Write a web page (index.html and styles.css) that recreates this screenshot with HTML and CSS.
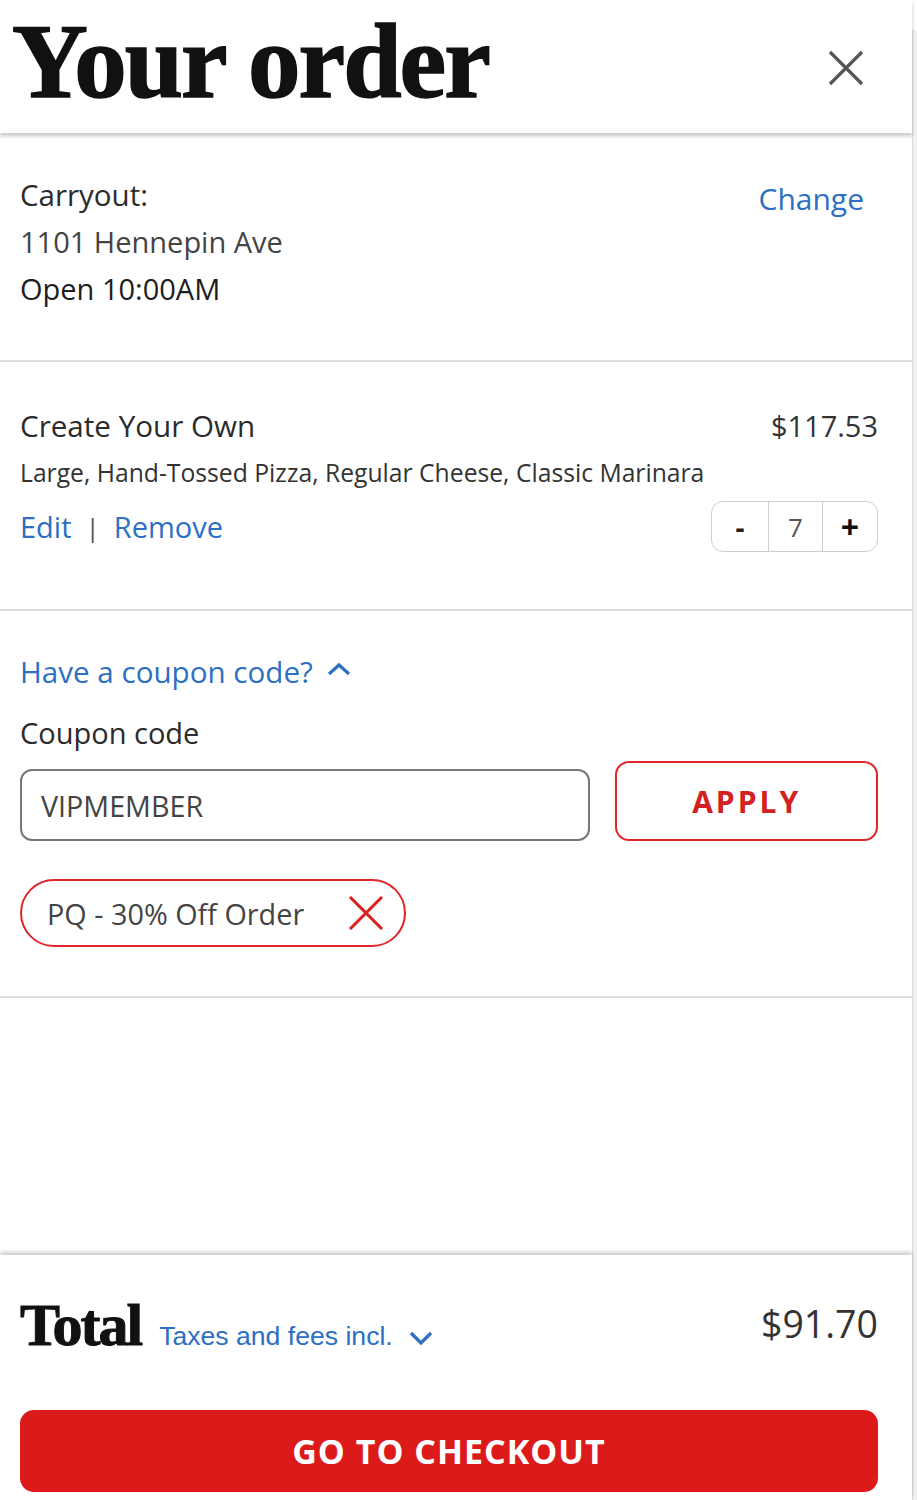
FILE: index.html
```html
<!DOCTYPE html>
<html lang="en">
<head>
<meta charset="utf-8">
<title>Your order</title>
<link rel="stylesheet" href="styles.css">
</head>
<body>
<div class="app">
  <div class="panel">
    <header class="header">
      <h1 class="title">Your order</h1>
      <button class="close" aria-label="Close">
        <svg width="36" height="36" viewBox="0 0 36 36"><path d="M2 2 L34 34 M34 2 L2 34" stroke="#555" stroke-width="3.2" fill="none"/></svg>
      </button>
    </header>

    <section class="section store">
      <div class="store-info">
        <div class="line label">Carryout:</div>
        <div class="line address">1101 Hennepin Ave</div>
        <div class="line hours">Open 10:00AM</div>
      </div>
      <a class="link change">Change</a>
    </section>

    <section class="section item">
      <div class="item-head">
        <div class="line item-name">Create Your Own</div>
        <div class="line item-price">$117.53</div>
      </div>
      <div class="line item-desc">Large, Hand-Tossed Pizza, Regular Cheese, Classic Marinara</div>
      <div class="item-actions">
        <div class="actions">
          <a class="link">Edit</a>
          <span class="sep">|</span>
          <a class="link">Remove</a>
        </div>
        <div class="stepper">
          <span class="step minus">-</span>
          <span class="step qty">7</span>
          <span class="step plus">+</span>
        </div>
      </div>
    </section>

    <section class="section coupon">
      <a class="link coupon-toggle">Have a coupon code?
        <svg width="24" height="14" viewBox="0 0 24 14"><path d="M2 12 L12 3 L22 12" stroke="#2d6fc2" stroke-width="3.2" fill="none"/></svg>
      </a>
      <label class="coupon-label">Coupon code</label>
      <div class="coupon-row">
        <div class="coupon-input">VIPMEMBER</div>
        <button class="apply">APPLY</button>
      </div>
      <div class="chip">
        <span class="chip-text">PQ - 30% Off Order</span>
        <svg width="36" height="34" viewBox="0 0 36 34"><path d="M2 1 L34 33 M34 1 L2 33" stroke="#d92020" stroke-width="3" fill="none"/></svg>
      </div>
    </section>

    <div class="spacer"></div>

    <footer class="footer">
      <div class="total-row">
        <div class="total-left">
          <span class="total-label">Total</span>
          <a class="taxes">Taxes and fees incl.
            <svg width="24" height="14" viewBox="0 0 24 14"><path d="M2 2 L12 12 L22 2" stroke="#2d6fc2" stroke-width="3.2" fill="none"/></svg>
          </a>
        </div>
        <span class="total-price">$91.70</span>
      </div>
      <button class="checkout">GO TO CHECKOUT</button>
    </footer>
  </div>
  <div class="scrollbar"></div>
</div>
</body>
</html>
```

FILE: styles.css
```css
* { box-sizing: border-box; }
html, body { margin: 0; padding: 0; background: #fff; }
body { font-family: "Open Sans", "Liberation Sans", sans-serif; color: #333; }

.app { display: flex; width: 917px; height: 1500px; }
.panel { flex: 1; display: flex; flex-direction: column; min-width: 0; }
.scrollbar { width: 5px; background: #f1f1f1; border-left: 1px solid #dcdcdc; margin-top: 30px; }

.header {
  height: 133px;
  display: flex; align-items: center; justify-content: space-between;
  padding: 0 48px 0 12px;
  box-shadow: 0 3px 4px rgba(0,0,0,0.22);
  position: relative; z-index: 1;
}
.title {
  margin: 0;
  font-family: "Liberation Serif", "Times New Roman", serif;
  font-weight: 700; font-size: 105px; line-height: 1;
  letter-spacing: -2px;
  color: #111;
  -webkit-text-stroke: 1.5px #111;
  transform: translateY(-5px);
}
.close { background: none; border: 0; padding: 0; display: flex; margin-top: 2px; }

.section { padding: 0 34px 0 20px; border-bottom: 2px solid #dcdcdc; }
.line { line-height: 47px; }
.link { color: #2d6fc2; text-decoration: none; }

.store { display: flex; justify-content: space-between; align-items: flex-start; padding-top: 38px; padding-bottom: 48px; }
.store .label { font-size: 29.5px; color: #2b2b2b; }
.store .address { font-size: 29px; color: #444; }
.store .hours { font-size: 29px; color: #1d1d1d; }
.change { font-size: 30px; line-height: 47px; margin-top: 4px; margin-right: 14px; }

.item { padding-top: 40px; padding-bottom: 57px; }
.item-head { display: flex; justify-content: space-between; }
.item-name { font-size: 29.6px; color: #2b2b2b; }
.item-price { font-size: 29px; color: #333; }
.item-desc { font-size: 24.7px; color: #333; line-height: 48px; }
.item-actions { display: flex; justify-content: space-between; align-items: center; margin-top: 4px; }
.actions { display: flex; align-items: center; gap: 14px; font-size: 29px; }
.sep { color: #555; font-size: 26px; }
.stepper {
  display: flex; height: 51px; width: 167px;
  border: 1.5px solid #cfcfcf; border-radius: 12px; overflow: hidden;
}
.step { display: flex; align-items: center; justify-content: center; font-size: 28px; }
.step + .step { border-left: 1.5px solid #cfcfcf; }
.minus { width: 56px; font-weight: 700; color: #222; }
.qty { width: 54px; color: #555; font-size: 26px; }
.plus { flex: 1; font-weight: 700; color: #111; font-size: 32px; }

.coupon { display: flex; flex-direction: column; align-items: flex-start; padding-top: 37px; padding-bottom: 49px; }
.coupon-toggle { font-size: 29.6px; line-height: 48px; display: flex; align-items: center; gap: 14px; }
.coupon-toggle svg { margin-top: -6px; }
.coupon-label { font-size: 29px; line-height: 48px; margin-top: 13px; color: #2b2b2b; }
.coupon-row { display: flex; align-items: flex-end; gap: 25px; margin-top: 4px; width: 100%; }
.coupon-input {
  width: 571px; height: 72px; border: 2px solid #777; border-radius: 12px;
  display: flex; align-items: center; padding-left: 19px;
  font-size: 28.7px; color: #444;
}
.apply {
  width: 263px; height: 80px; border: 2px solid #e0262a; border-radius: 14px; background: #fff;
  font-family: "Open Sans", sans-serif; font-weight: 700; font-size: 30px; letter-spacing: 3px;
  color: #d42020; padding: 0;
}
.chip {
  margin-top: 38px; height: 68px; width: 386px;
  border: 2px solid #e0262a; border-radius: 34px;
  display: flex; align-items: center; justify-content: space-between;
  padding: 0 20px 0 25px;
}
.chip-text { font-size: 28.8px; color: #444; }

.spacer { flex: 1; }

.footer {
  padding: 40px 34px 8px 20px;
  box-shadow: 0 -3px 4px rgba(0,0,0,0.2);
  position: relative;
}
.total-row { display: flex; justify-content: space-between; align-items: center; height: 60px; }
.total-left { display: flex; align-items: baseline; gap: 18px; }
.total-label {
  font-family: "Liberation Serif", "Times New Roman", serif; font-weight: 700;
  font-size: 60px; letter-spacing: -2px; color: #111; -webkit-text-stroke: 1px #111;
}
.taxes {
  font-family: "Liberation Sans", Arial, sans-serif; font-size: 26.6px; color: #2d6fc2;
  display: inline-flex; align-items: center; gap: 16px;
}
.taxes svg { margin-top: 4px; }
.total-price { font-size: 37.5px; color: #333; margin-top: -4px; }
.checkout {
  margin-top: 55px; width: 100%; height: 82px;
  background: #dc1a1a; border: 0; border-radius: 14px;
  font-family: "Open Sans", sans-serif; font-weight: 700; font-size: 34px; letter-spacing: 1px;
  color: #fff;
}
```
